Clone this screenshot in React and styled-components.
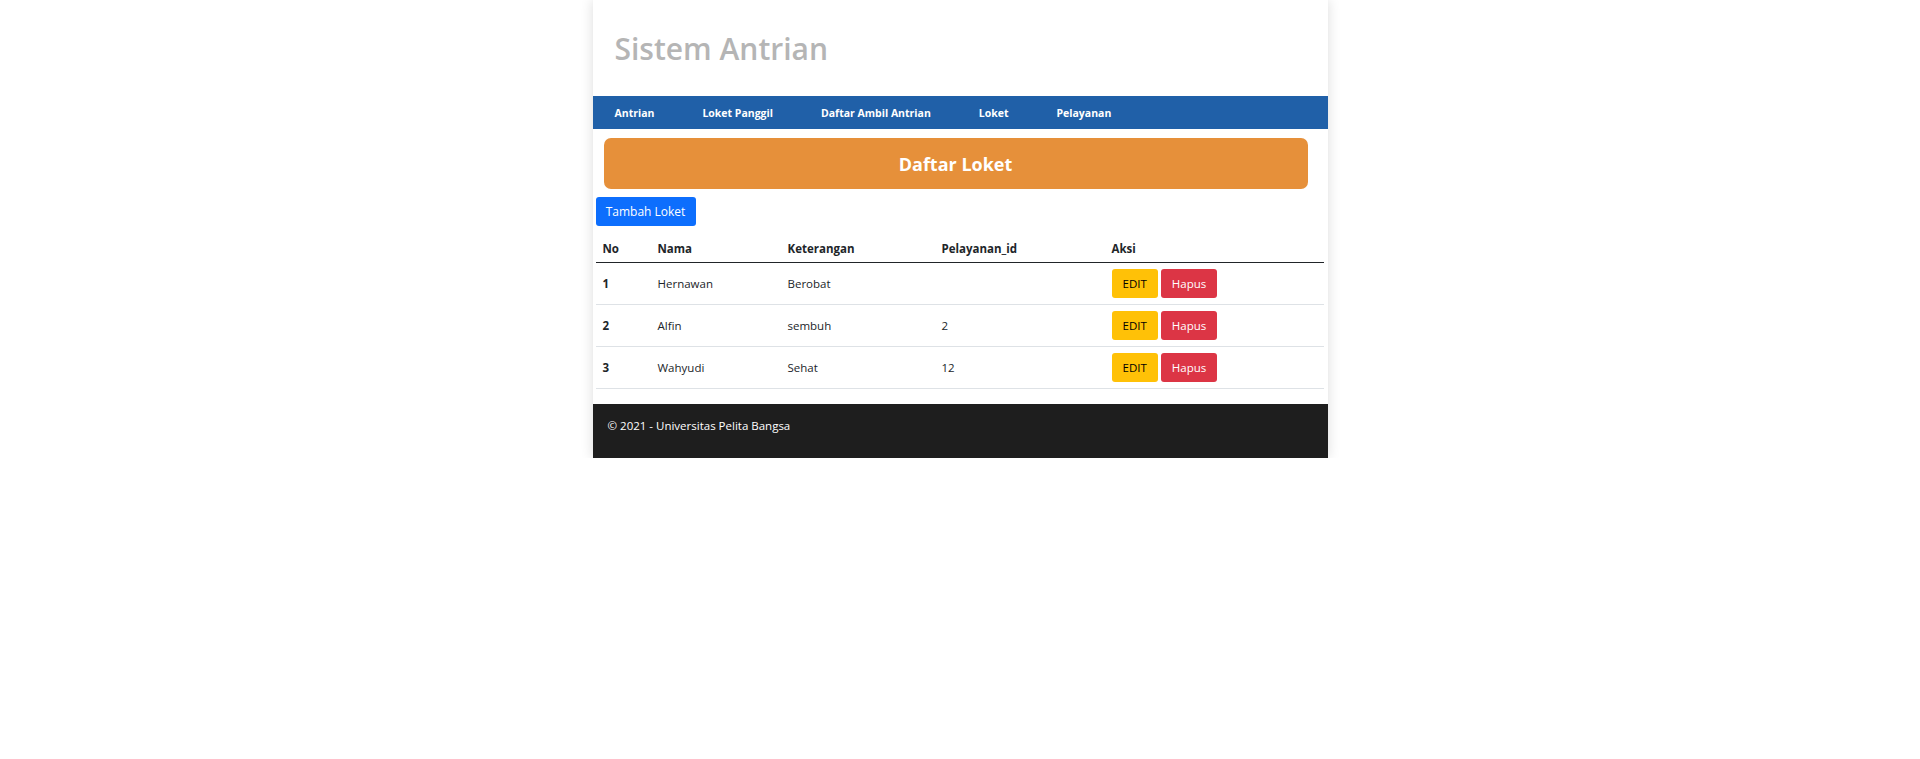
import React from 'react'
import styled, { createGlobalStyle } from 'styled-components'

const GlobalStyle = createGlobalStyle`
    body {
        margin: 0;
        background: #fff;
        font-family: "Open Sans", "Noto Sans", sans-serif;
        color: #212529;
    }
`;

const Container = styled.div`
    width: 735px;
    margin: 0 auto;
    background: #fff;
    box-shadow: 0 0 12px rgba(0, 0, 0, 0.14);
`;

const Header = styled.header`
    height: 96px;
    display: flex;
    align-items: center;
    padding-left: 22px;
    box-sizing: border-box;
`;

const Title = styled.h1`
    margin: 0;
    font-size: 30px;
    font-weight: 600;
    color: #b5b5b5;
`;

const Nav = styled.nav`
    height: 33px;
    background-color: #2060a8;
    display: flex;
    align-items: center;
    gap: 48px;
    padding-left: 22px;
`;

const NavLink = styled.a`
    color: #fff;
    font-size: 10.5px;
    font-weight: 700;
    text-decoration: none;
    cursor: pointer;
`;

const Content = styled.div`
    padding: 0 4px 0 3px;
`;

const Banner = styled.div`
    margin: 9px 16px 0 8px;
    height: 51px;
    border-radius: 7px;
    background-color: #e6903a;
    color: #fff;
    font-size: 18px;
    font-weight: 700;
    display: flex;
    align-items: center;
    justify-content: center;
`;

const Button = styled.button`
    height: 29px;
    padding: 0 ${props => props.pad || 11}px;
    border: none;
    border-radius: 3px;
    font-family: inherit;
    font-size: ${props => props.size || 11.5}px;
    background-color: ${props => props.bg};
    color: ${props => props.fg || '#fff'};
    cursor: pointer;
    & + & {
        margin-left: 3px;
    }
`;

const AddButton = styled(Button)`
    margin-top: 8px;
    width: 100px;
    padding: 0;
`;

const Table = styled.table`
    width: 728px;
    margin-top: 8px;
    border-collapse: collapse;
    table-layout: fixed;
    font-size: 11.5px;
`;

const Th = styled.th`
    box-sizing: border-box;
    width: ${props => props.w ? props.w + 'px' : 'auto'};
    text-align: left;
    font-weight: 700;
    padding: 7px 7px 6px;
    border-bottom: 1px solid #212529;
`;

const Td = styled.td`
    padding: 6px 7px;
    height: 29px;
    border-bottom: 1px solid #dee2e6;
    font-weight: ${props => props.bold ? 700 : 400};
`;

const Footer = styled.footer`
    margin-top: 15px;
    height: 54px;
    box-sizing: border-box;
    padding: 14px 15px;
    background-color: #1e1e1e;
    color: #fff;
    font-size: 11.5px;
`;

const rows = [
    { no: 1, nama: 'Hernawan', ket: 'Berobat', pid: '' },
    { no: 2, nama: 'Alfin', ket: 'sembuh', pid: '2' },
    { no: 3, nama: 'Wahyudi', ket: 'Sehat', pid: '12' },
];

const App = () => {
    return (
        <>
            <GlobalStyle />
            <Container>
                <Header>
                    <Title>Sistem Antrian</Title>
                </Header>
                <Nav>
                    <NavLink>Antrian</NavLink>
                    <NavLink>Loket Panggil</NavLink>
                    <NavLink>Daftar Ambil Antrian</NavLink>
                    <NavLink>Loket</NavLink>
                    <NavLink>Pelayanan</NavLink>
                </Nav>
                <Content>
                    <Banner>Daftar Loket</Banner>
                    <AddButton bg="#0d6efd" size={12}>Tambah Loket</AddButton>
                    <Table>
                        <thead>
                            <tr>
                                <Th w={55}>No</Th>
                                <Th w={130}>Nama</Th>
                                <Th w={154}>Keterangan</Th>
                                <Th w={170}>Pelayanan_id</Th>
                                <Th>Aksi</Th>
                            </tr>
                        </thead>
                        <tbody>
                            {rows.map(r => (
                                <tr key={r.no}>
                                    <Td bold>{r.no}</Td>
                                    <Td>{r.nama}</Td>
                                    <Td>{r.ket}</Td>
                                    <Td>{r.pid}</Td>
                                    <Td>
                                        <Button bg="#ffc107" fg="#000">EDIT</Button>
                                        <Button bg="#dc3545">Hapus</Button>
                                    </Td>
                                </tr>
                            ))}
                        </tbody>
                    </Table>
                </Content>
                <Footer>© 2021 - Universitas Pelita Bangsa</Footer>
            </Container>
        </>
    )
}

export default App
